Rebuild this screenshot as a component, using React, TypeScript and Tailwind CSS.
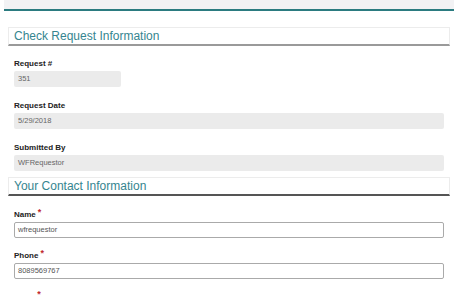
import React from "react";

function Header({ title, line }: { title: string; line: string }) {
  return (
    <div
      className={`ml-[8px] w-[442px] h-[19px] border-t border-l border-r border-t-[#ececec] border-l-[#ececec] border-r-[#ececec] border-b-2 ${line} flex items-center pl-[5px]`}
    >
      <span className="text-[12px] leading-[12px] text-[#35858f]">{title}</span>
    </div>
  );
}

function ReadField({ label, value, w }: { label: string; value: string; w: string }) {
  return (
    <div className="ml-[14px] mb-[14px]">
      <div className="h-[10px] text-[8px] leading-[10px] font-bold text-[#222]">{label}</div>
      <div className={`mt-[2px] h-[16px] ${w} bg-[#ebebeb] rounded-[2px] flex items-center pl-[4px] text-[7.5px] text-[#666]`}>
        {value}
      </div>
    </div>
  );
}

function EditField({ label, value }: { label: string; value: string }) {
  return (
    <div className="ml-[14px] mb-[13px]">
      <div className="h-[10px] text-[8px] leading-[10px] font-bold text-[#222] flex">
        {label}
        <span className="text-[#c0282d] text-[9px] leading-[8px] ml-[2px] -mt-[2px]">*</span>
      </div>
      <div className="mt-[2px] h-[16px] w-[430px] bg-white border border-[#aaaaaa] rounded-[2px] flex items-center pl-[3px] text-[7.5px] text-[#555]">
        {value}
      </div>
    </div>
  );
}

export default function App() {
  return (
    <div className="w-[474px] h-[297px] bg-white overflow-hidden" style={{ fontFamily: '"Liberation Sans", Arial, sans-serif' }}>
      <div className="ml-[4px] w-[450px] h-[11px] bg-[#f2f2f4] border-b-2 border-[#2b7b80]" />
      <div className="h-[16px]" />
      <Header title="Check Request Information" line="border-b-[#9a9a9a]" />
      <div className="h-[13px]" />
      <ReadField label="Request #" value="351" w="w-[107px]" />
      <ReadField label="Request Date" value="5/29/2018" w="w-[430px]" />
      <ReadField label="Submitted By" value="WFRequestor" w="w-[430px]" />
      <div className="-mt-[8px]" />
      <Header title="Your Contact Information" line="border-b-[#555555]" />
      <div className="h-[14px]" />
      <EditField label="Name" value="wfrequestor" />
      <EditField label="Phone" value="8089569767" />
      <div className="ml-[14px] h-[10px] text-[8px] leading-[10px] font-bold text-[#222] flex">
        <span className="invisible">Email</span>
        <span className="text-[#c0282d] text-[9px] leading-[8px] ml-[2px] -mt-[2px]">*</span>
      </div>
    </div>
  );
}
